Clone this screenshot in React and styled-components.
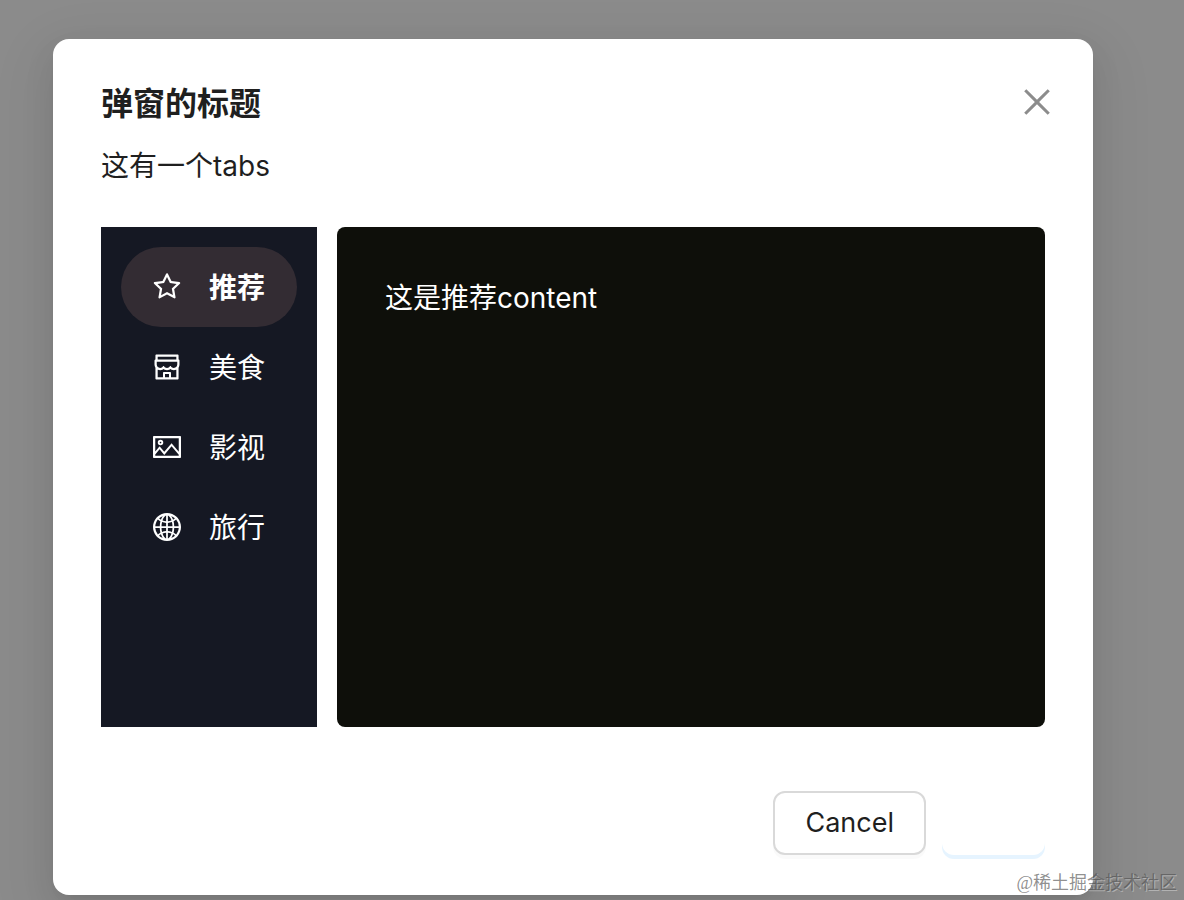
import React, { useState } from "react";
import styled, { createGlobalStyle } from "styled-components";
import {
  AiOutlineClose,
  AiOutlineGlobal,
  AiOutlinePicture,
  AiOutlineShop,
  AiOutlineStar,
} from "react-icons/ai";

const GlobalStyle = createGlobalStyle`
  *, *::before, *::after { box-sizing: border-box; }
  body {
    margin: 0;
    background: #8b8b8b;
    color: #1f1f1f;
    font: 400 28px/44px Inter, "Noto Sans CJK SC", sans-serif;
  }
  button { font: inherit; color: inherit; cursor: pointer; }
`;

const Backdrop = styled.div`
  min-height: 100vh;
  padding: 39px 91px 4px 53px;
`;

const Dialog = styled.section`
  position: relative;
  padding: 41px 48px 40px;
  border-radius: 16px;
  background: #fff;
  box-shadow:
    0 12px 32px 0 rgba(0, 0, 0, 0.08),
    0 6px 12px -8px rgba(0, 0, 0, 0.12),
    0 18px 56px 16px rgba(0, 0, 0, 0.05);
`;

const Title = styled.h1`
  margin: 0 0 16px;
  font-size: 32px;
  line-height: 48px;
  font-weight: 600;
`;

const Description = styled.p`
  margin: 0 0 39px;
`;

const CloseButton = styled.button`
  position: absolute;
  top: 41px;
  right: 34px;
  display: flex;
  align-items: center;
  justify-content: center;
  width: 44px;
  height: 44px;
  padding: 0;
  border: 0;
  background: none;
  color: #8c8c8c;
  font-size: 38px;
`;

const Tabs = styled.div`
  display: flex;
  gap: 20px;
  min-height: 500px;
`;

const TabList = styled.div`
  display: flex;
  flex-direction: column;
  flex: none;
  width: 216px;
  padding: 20px;
  background: #151823;
`;

const Tab = styled.button`
  display: flex;
  align-items: center;
  gap: 26px;
  height: 80px;
  padding: 0 30px;
  border: 0;
  border-radius: 40px;
  background: ${({ $active }) => ($active ? "#332c33" : "transparent")};
  color: #fff;
  font-weight: ${({ $active }) => ($active ? 700 : 400)};
  white-space: nowrap;

  svg { flex: none; width: 32px; height: 32px; }
`;

const TabLabel = styled.span`
  padding-top: 2px;
`;

const Panel = styled.div`
  flex: 1;
  min-width: 0;
  padding: 49px 48px;
  border-radius: 8px;
  background: #0e0f0a;
  color: #fff;
`;

const Footer = styled.footer`
  display: flex;
  justify-content: flex-end;
  gap: 16px;
  margin-top: 64px;
`;

const Button = styled.button`
  min-width: 103px;
  height: 64px;
  padding: 0 30px;
  border: 2px solid ${({ $primary }) => ($primary ? "transparent" : "#d9d9d9")};
  border-radius: 12px;
  background: #fff;
  font-size: 27px;
  box-shadow: 0 4px 0 ${({ $primary }) => ($primary ? "rgba(5, 145, 255, 0.1)" : "rgba(0, 0, 0, 0.02)")};
`;

const Watermark = styled.div`
  position: absolute;
  top: 870px;
  right: 7px;
  color: rgba(80, 80, 80, 0.65);
  font-family: "Liberation Serif", "Noto Sans CJK SC", serif;
  font-size: 18px;
  line-height: 26px;
  text-shadow: 1px 1px 0 rgba(255, 255, 255, 0.35);
  pointer-events: none;
`;

const items = [
  { label: "推荐", Icon: AiOutlineStar },
  { label: "美食", Icon: AiOutlineShop },
  { label: "影视", Icon: AiOutlinePicture },
  { label: "旅行", Icon: AiOutlineGlobal },
];

export default function App() {
  const [current, setCurrent] = useState(0);

  return (
    <Backdrop>
      <GlobalStyle />
      <Dialog role="dialog" aria-labelledby="dialog-title">
        <Title id="dialog-title">弹窗的标题</Title>
        <CloseButton type="button" aria-label="Close">
          <AiOutlineClose />
        </CloseButton>
        <Description>这有一个tabs</Description>
        <Tabs>
          <TabList role="tablist" aria-orientation="vertical">
            {items.map(({ label, Icon }, index) => (
              <Tab
                key={label}
                id={`tab-${index}`}
                type="button"
                role="tab"
                aria-selected={index === current}
                aria-controls="tab-panel"
                $active={index === current}
                onClick={() => setCurrent(index)}
              >
                <Icon aria-hidden="true" />
                <TabLabel>{label}</TabLabel>
              </Tab>
            ))}
          </TabList>
          <Panel role="tabpanel" id="tab-panel" aria-labelledby={`tab-${current}`}>
            这是{items[current].label}content
          </Panel>
        </Tabs>
        <Footer>
          <Button type="button">Cancel</Button>
          <Button type="button" $primary aria-label="OK" />
        </Footer>
      </Dialog>
      <Watermark>@稀土掘金技术社区</Watermark>
    </Backdrop>
  );
}
